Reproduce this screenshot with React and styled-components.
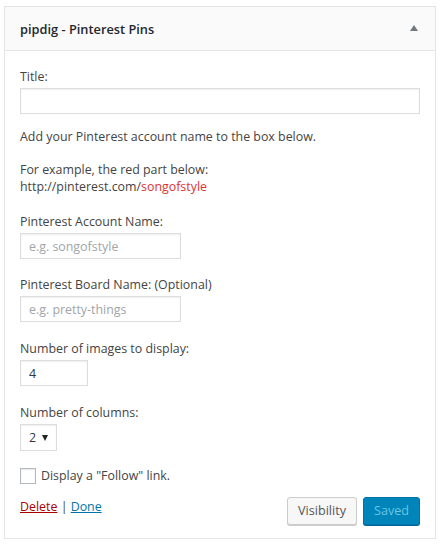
import styled, { createGlobalStyle } from 'styled-components';

const GlobalStyle = createGlobalStyle`
  html, body {
    margin: 0;
    padding: 0;
    background: #fff;
  }
  body {
    font-family: "Open Sans", "Noto Sans", sans-serif;
    font-size: 12.4px;
    color: #444;
  }
`;

const Widget = styled.div`
  width: 430px;
  margin: 6px 0 0 4px;
  border: 1px solid #e5e5e5;
  box-shadow: 0 1px 1px rgba(0, 0, 0, 0.04);
  background: #fff;
`;

const WidgetTop = styled.div`
  display: flex;
  align-items: center;
  justify-content: space-between;
  height: 43px;
  padding: 0 17px 0 15px;
  background: #fafafa;
  border-bottom: 1px solid #e5e5e5;
`;

const WidgetTitle = styled.h3`
  margin: 0;
  font-size: 12.8px;
  font-weight: 600;
  color: #23282d;
`;

const Toggle = styled.span`
  width: 0;
  height: 0;
  border-left: 4px solid transparent;
  border-right: 4px solid transparent;
  border-bottom: 6px solid #72777c;
  margin-top: -2px;
`;

const Inside = styled.div`
  padding: 17px 15px 13px;
`;

const Field = styled.div`
  display: flex;
  flex-direction: column;
  align-items: flex-start;
  margin-bottom: ${(p) => p.$gap ?? 17}px;
`;

const Label = styled.label`
  line-height: 18px;
  margin-bottom: 2px;
`;

const Input = styled.input`
  box-sizing: border-box;
  width: ${(p) => p.$width};
  height: 26px;
  padding: 2px 8px;
  border: 1px solid #ddd;
  box-shadow: inset 0 1px 2px rgba(0, 0, 0, 0.07);
  font: inherit;
  color: #32373c;
  background: #fff;
  outline: none;
  &::placeholder {
    color: #a0a5aa;
  }
`;

const Text = styled.p`
  margin: 0 0 ${(p) => p.$gap ?? 16}px;
  line-height: 17px;
`;

const Red = styled.span`
  color: #dc3232;
`;

const Select = styled.div`
  box-sizing: border-box;
  display: flex;
  align-items: center;
  gap: 6px;
  height: 27px;
  padding: 0 8px 0 8px;
  border: 1px solid #ddd;
  box-shadow: inset 0 1px 2px rgba(0, 0, 0, 0.07);
  color: #32373c;
`;

const Caret = styled.span`
  width: 0;
  height: 0;
  border-left: 3px solid transparent;
  border-right: 3px solid transparent;
  border-top: 6px solid #222;
`;

const CheckRow = styled.label`
  display: flex;
  align-items: center;
  gap: 5px;
  margin-bottom: 14px;
`;

const Checkbox = styled.span`
  box-sizing: border-box;
  width: 16px;
  height: 16px;
  border: 1px solid #b4b9be;
  background: #fff;
  box-shadow: inset 0 1px 2px rgba(0, 0, 0, 0.1);
`;

const Footer = styled.div`
  display: flex;
  align-items: flex-start;
  justify-content: space-between;
`;

const Links = styled.div`
  color: #444;
  line-height: 17px;
`;

const Link = styled.a`
  color: ${(p) => (p.$danger ? '#a00' : '#0073aa')};
  text-decoration: underline;
`;

const Buttons = styled.div`
  display: flex;
  gap: 6px;
  margin-top: -1px;
`;

const Button = styled.button`
  box-sizing: border-box;
  height: 28px;
  padding: 0 10px 1px;
  border-radius: 3px;
  font: inherit;
  font-size: 12.6px;
  border: 1px solid ${(p) => (p.$primary ? '#0073aa' : '#ccc')};
  background: ${(p) => (p.$primary ? '#0085ba' : '#f7f7f7')};
  color: ${(p) => (p.$primary ? '#66c6e4' : '#555')};
  box-shadow: 0 1px 0 ${(p) => (p.$primary ? '#006799' : '#ccc')};
`;

export default function App() {
  return (
    <>
      <GlobalStyle />
      <Widget>
        <WidgetTop>
          <WidgetTitle>pipdig - Pinterest Pins</WidgetTitle>
          <Toggle />
        </WidgetTop>
        <Inside>
          <Field $gap={14}>
            <Label>Title:</Label>
            <Input $width="100%" />
          </Field>
          <Text>Add your Pinterest account name to the box below.</Text>
          <Text $gap={18}>
            For example, the red part below:
            <br />
            http://pinterest.com/<Red>songofstyle</Red>
          </Text>
          <Field>
            <Label>Pinterest Account Name:</Label>
            <Input $width="161px" placeholder="e.g. songofstyle" />
          </Field>
          <Field $gap={18}>
            <Label>Pinterest Board Name: (Optional)</Label>
            <Input $width="161px" placeholder="e.g. pretty-things" />
          </Field>
          <Field $gap={18}>
            <Label>Number of images to display:</Label>
            <Input $width="68px" defaultValue="4" />
          </Field>
          <Field $gap={16}>
            <Label>Number of columns:</Label>
            <Select>
              2<Caret />
            </Select>
          </Field>
          <CheckRow>
            <Checkbox />
            Display a "Follow" link.
          </CheckRow>
          <Footer>
            <Links>
              <Link $danger>Delete</Link> | <Link>Done</Link>
            </Links>
            <Buttons>
              <Button>Visibility</Button>
              <Button $primary>Saved</Button>
            </Buttons>
          </Footer>
        </Inside>
      </Widget>
    </>
  );
}
